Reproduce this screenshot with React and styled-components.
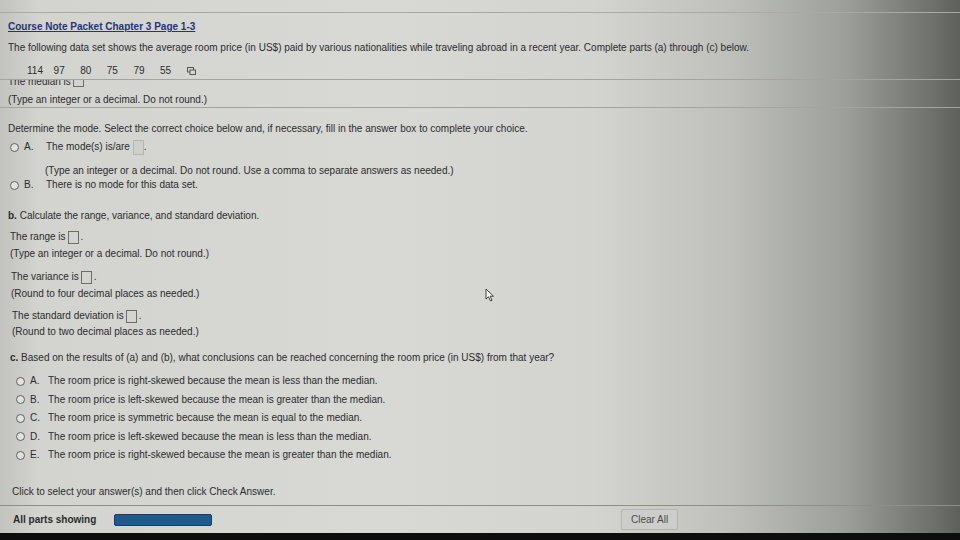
import React from 'react'
import styled, { createGlobalStyle } from 'styled-components'

const GlobalStyle = createGlobalStyle`
    html, body {
        margin: 0;
        padding: 0;
        background: #111;
    }
    body {
        font-family: "Liberation Sans", Arial, sans-serif;
        color: #2b2c2b;
    }
`

const Screen = styled.div`
    width: 960px;
    height: 540px;
    display: flex;
    flex-direction: column;
    overflow: hidden;
    background: #0e0d0d;
    position: relative;
`

const Panel = styled.div`
    flex: 1;
    display: flex;
    flex-direction: column;
    background: linear-gradient(90deg, #c2c3bf 0%, #d3d4d0 4%, #d8d9d5 40%, #d3d4d0 62%, #bfc0bc 76%, #9d9f9b 88%, #6f716d 97%, #5e605c 100%);
    margin-bottom: 7px;
`

const TopBar = styled.div`
    height: 12px;
    border-bottom: 1px solid #a9aaa6;
`

const Content = styled.div`
    flex: 1;
    padding: 8px 0 0 8px;
    font-size: 10px;
    line-height: 12px;
`

const SourceLink = styled.a`
    display: block;
    color: #26337a;
    font-weight: bold;
    text-decoration: underline;
`

const Para = styled.p`
    margin: ${p => p.$m || '0'};
    padding-left: ${p => p.$indent || 0}px;
`

const DataRow = styled.div`
    display: flex;
    align-items: center;
    padding-left: 19px;
    margin-top: 10px;
    height: 14px;
`

const DataCell = styled.span`
    width: 26.6px;
`

const Divider = styled.div`
    height: 1px;
    background: #a3a4a0;
    margin: ${p => p.$m || '0'};
`

const ClippedLine = styled.div`
    height: 8px;
    overflow: hidden;
    display: flex;
    align-items: flex-end;
`

const Inline = styled.div`
    display: flex;
    align-items: center;
    gap: 2px;
    margin: ${p => p.$m || '0'};
    padding-left: ${p => p.$indent || 0}px;
`

const AnswerBox = styled.span`
    display: inline-block;
    flex-shrink: 0;
    width: ${p => p.$w || 11}px;
    height: ${p => p.$h || 13}px;
    border: 1px solid ${p => p.$light ? '#b5b6b2' : '#6c6d6a'};
    background: ${p => p.$light ? '#cfd0cc' : 'transparent'};
    box-sizing: border-box;
`

const Choice = styled.div`
    display: flex;
    align-items: center;
    height: 14px;
    margin: ${p => p.$m || '0'};
    padding-left: ${p => p.$indent || 2}px;
`

const Radio = styled.span`
    width: 9px;
    height: 9px;
    border-radius: 50%;
    border: 1px solid #5f615e;
    background: #e2e3df;
    box-sizing: border-box;
    margin-right: 5px;
`

const Letter = styled.span`
    width: ${p => p.$w || 22}px;
`

const SubBlock = styled.div`
    padding-left: ${p => p.$indent || 37}px;
`

const Footer = styled.div`
    height: 27px;
    border-top: 1px solid #8e8f8b;
    display: flex;
    align-items: center;
    padding-left: 13px;
    font-size: 10px;
`

const FooterLabel = styled.span`
    font-weight: bold;
    width: 101px;
`

const Progress = styled.div`
    width: 96px;
    height: 10px;
    border-radius: 2px;
    background: #1f5a8c;
    border: 1px solid #163f66;
`

const ClearButton = styled.button`
    margin-left: 409px;
    height: 21px;
    padding: 0 9px;
    font-family: "Liberation Sans", Arial, sans-serif;
    font-size: 10px;
    color: #4a4b49;
    background: #cdcecb;
    border: 1px solid #b4b5b1;
    border-radius: 2px;
`

const Cursor = styled.svg`
    position: absolute;
    left: 485px;
    top: 288px;
`

function CopyIcon() {
    return (
        <svg width="9" height="8" viewBox="0 0 9 8">
            <rect x="0.5" y="0.5" width="6" height="4.5" fill="none" stroke="#555" strokeWidth="1" />
            <rect x="3" y="3" width="5.5" height="4.5" fill="#d6d7d3" stroke="#555" strokeWidth="1" />
        </svg>
    )
}

const partC = [
    ['A.', 'The room price is right-skewed because the mean is less than the median.'],
    ['B.', 'The room price is left-skewed because the mean is greater than the median.'],
    ['C.', 'The room price is symmetric because the mean is equal to the median.'],
    ['D.', 'The room price is left-skewed because the mean is less than the median.'],
    ['E.', 'The room price is right-skewed because the mean is greater than the median.'],
]

const data = ['114', '97', '80', '75', '79', '55']

export default function App() {
    return (
        <Screen>
            <GlobalStyle />
            <Panel>
                <TopBar />
                <Content>
                    <SourceLink href="#">Course Note Packet Chapter 3 Page 1-3</SourceLink>
                    <Para $m="9px 0 0 0">
                        The following data set shows the average room price (in US$) paid by various nationalities while traveling abroad in a recent year. Complete parts (a) through (c) below.
                    </Para>
                    <DataRow>
                        {data.map(d => <DataCell key={d}>{d}</DataCell>)}
                        <CopyIcon />
                    </DataRow>
                    <Divider $m="1px 0 0 -8px" />
                    <ClippedLine>
                        <Inline>
                            The median is <AnswerBox $w={11} $h={10} />
                        </Inline>
                    </ClippedLine>
                    <Para $m="6px 0 0 0">(Type an integer or a decimal. Do not round.)</Para>
                    <Divider $m="1px 0 0 -8px" />

                    <Para $m="15px 0 0 0">Determine the mode. Select the correct choice below and, if necessary, fill in the answer box to complete your choice.</Para>
                    <Choice $m="5px 0 0 0">
                        <Radio />
                        <Letter>A.</Letter>
                        The mode(s) is/are&nbsp;<AnswerBox $light $w={11} $h={15} />.
                    </Choice>
                    <SubBlock>
                        <Para $m="11px 0 0 0">(Type an integer or a decimal. Do not round. Use a comma to separate answers as needed.)</Para>
                    </SubBlock>
                    <Choice $m="1px 0 0 0">
                        <Radio />
                        <Letter>B.</Letter>
                        There is no mode for this data set.
                    </Choice>

                    <Para $m="18px 0 0 0"><b>b.</b> Calculate the range, variance, and standard deviation.</Para>
                    <Inline $m="8.5px 0 0 0" $indent={2}>
                        The range is <AnswerBox />.
                    </Inline>
                    <Para $m="4.5px 0 0 0" $indent={2}>(Type an integer or a decimal. Do not round.)</Para>
                    <Inline $m="10.5px 0 0 0" $indent={3}>
                        The variance is <AnswerBox />.
                    </Inline>
                    <Para $m="4.5px 0 0 0" $indent={3}>(Round to four decimal places as needed.)</Para>
                    <Inline $m="9.5px 0 0 0" $indent={4}>
                        The standard deviation is <AnswerBox />.
                    </Inline>
                    <Para $m="3.5px 0 0 0" $indent={4}>(Round to two decimal places as needed.)</Para>

                    <Para $m="14px 0 0 0" $indent={2}><b>c.</b> Based on the results of (a) and (b), what conclusions can be reached concerning the room price (in US$) from that year?</Para>
                    {partC.map(([l, t], i) => (
                        <Choice key={l} $m={i === 0 ? '10px 0 0 0' : '4.5px 0 0 0'} $indent={8}>
                            <Radio />
                            <Letter $w={18}>{l}</Letter>
                            {t}
                        </Choice>
                    ))}

                    <Para $m="24px 0 0 0" $indent={4}>Click to select your answer(s) and then click Check Answer.</Para>
                </Content>
                <Footer>
                    <FooterLabel>All parts showing</FooterLabel>
                    <Progress />
                    <ClearButton>Clear All</ClearButton>
                </Footer>
            </Panel>
            <Cursor width="12" height="14" viewBox="0 0 12 14">
                <path d="M1 1 L1 11 L3.5 8.8 L5.5 13 L7 12.3 L5.2 8.2 L8.5 8.2 Z" fill="#f2f2f0" stroke="#333" strokeWidth="0.9" strokeLinejoin="round" />
            </Cursor>
        </Screen>
    )
}
